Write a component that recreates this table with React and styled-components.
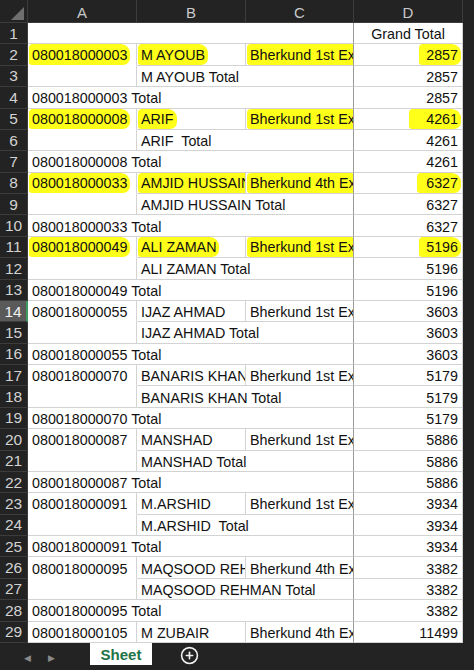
import React from 'react';
import styled, { createGlobalStyle } from 'styled-components';
import { CirclePlus } from 'lucide-react';

const GlobalStyle = createGlobalStyle`
    html, body {
        margin: 0;
        padding: 0;
        background: #232323;
    }
    * {
        box-sizing: border-box;
    }
`;

const groups = [
    { id: '080018000003', name: 'M AYOUB', nameTotal: 'M AYOUB Total', area: 'Bherkund 1st Ext', total: 2857, hl: { d: 7 } },
    { id: '080018000008', name: 'ARIF', nameTotal: 'ARIF  Total', area: 'Bherkund 1st Ext', total: 4261, hl: { d: 17 } },
    { id: '080018000033', name: 'AMJID HUSSAIN', nameTotal: 'AMJID HUSSAIN Total', area: 'Bherkund 4th Ext', total: 6327, hl: { d: 9, bFill: true } },
    { id: '080018000049', name: 'ALI ZAMAN', nameTotal: 'ALI ZAMAN Total', area: 'Bherkund 1st Ext', total: 5196, hl: { d: 7 } },
    { id: '080018000055', name: 'IJAZ AHMAD', nameTotal: 'IJAZ AHMAD Total', area: 'Bherkund 1st Ext', total: 3603 },
    { id: '080018000070', name: 'BANARIS KHAN', nameTotal: 'BANARIS KHAN Total', area: 'Bherkund 1st Ext', total: 5179 },
    { id: '080018000087', name: 'MANSHAD', nameTotal: 'MANSHAD Total', area: 'Bherkund 1st Ext', total: 5886 },
    { id: '080018000091', name: 'M.ARSHID', nameTotal: 'M.ARSHID  Total', area: 'Bherkund 1st Ext', total: 3934 },
    { id: '080018000095', name: 'MAQSOOD REHMAN', nameTotal: 'MAQSOOD REHMAN Total', area: 'Bherkund 4th Ext', total: 3382 },
    { id: '080018000105', name: 'M ZUBAIR', area: 'Bherkund 4th Ext', total: 11499, partial: true },
];

const Marked = ({ on, fill, pl, children }) =>
    on ? (
        <Mark $fill={fill} $pl={pl}>
            {children}
        </Mark>
    ) : (
        children
    );

const App = () => {
    let rowNo = 1;
    const rows = [];

    rows.push(
        <React.Fragment key='r1'>
            <RowHead $row={rowNo}>{rowNo}</RowHead>
            <Cell $col={2} $span={3} />
            <Cell $col={5} $align='center' $divider>
                Grand Total
            </Cell>
        </React.Fragment>
    );

    groups.forEach((g) => {
        const on = Boolean(g.hl);
        rowNo += 1;
        rows.push(
            <React.Fragment key={g.id}>
                <RowHead $row={rowNo} $active={rowNo === 14}>
                    {rowNo}
                </RowHead>
                <Cell $col={2} $noBottom={!g.partial}>
                    <Marked on={on}>{g.id}</Marked>
                </Cell>
                <Cell $col={3}>
                    <Marked on={on} fill={g.hl && g.hl.bFill}>
                        {g.name}
                    </Marked>
                </Cell>
                <Cell $col={4}>
                    <Marked on={on} fill>
                        {g.area}
                    </Marked>
                </Cell>
                <Cell $col={5} $align='flex-end' $divider>
                    <Marked on={on} pl={g.hl && g.hl.d}>
                        {g.total}
                    </Marked>
                </Cell>
            </React.Fragment>
        );
        if (g.partial) return;

        rowNo += 1;
        rows.push(
            <React.Fragment key={g.id + '-n'}>
                <RowHead $row={rowNo}>{rowNo}</RowHead>
                <Cell $col={2} />
                <Cell $col={3} $span={2}>
                    {g.nameTotal}
                </Cell>
                <Cell $col={5} $align='flex-end' $divider>
                    {g.total}
                </Cell>
            </React.Fragment>
        );

        rowNo += 1;
        rows.push(
            <React.Fragment key={g.id + '-t'}>
                <RowHead $row={rowNo}>{rowNo}</RowHead>
                <Cell $col={2} $span={3}>
                    {g.id} Total
                </Cell>
                <Cell $col={5} $align='flex-end' $divider>
                    {g.total}
                </Cell>
            </React.Fragment>
        );
    });

    return (
        <>
            <GlobalStyle />
            <Window>
                <SheetArea>
                    <Grid>
                        <Corner>
                            <CornerTriangle />
                        </Corner>
                        <ColHead>A</ColHead>
                        <ColHead>B</ColHead>
                        <ColHead>C</ColHead>
                        <ColHead>D</ColHead>
                        {rows}
                    </Grid>
                    <Gutter />
                </SheetArea>
                <TabBar>
                    <NavArrows>
                        <Arrow>◀</Arrow>
                        <Arrow>▶</Arrow>
                    </NavArrows>
                    <Tab>Sheet</Tab>
                    <AddButton>
                        <CirclePlus size={19} color='#f0f0f0' strokeWidth={2} />
                    </AddButton>
                </TabBar>
            </Window>
        </>
    );
};

export default App;

const Window = styled.div`
    width: 474px;
    height: 670px;
    display: flex;
    flex-direction: column;
    background: #232323;
    font-family: 'Liberation Sans', Arial, sans-serif;
    overflow: hidden;
`;

const SheetArea = styled.div`
    display: flex;
    height: 643px;
`;

const Grid = styled.div`
    display: grid;
    width: 463px;
    grid-template-columns: 28px 109px 109px 108px 109px;
    grid-template-rows: 23px;
    grid-auto-rows: 21.38px;
    background: #fff;
`;

const Gutter = styled.div`
    flex: 1;
    background: #232323;
`;

const Corner = styled.div`
    background: #232323;
    border-right: 1px solid #3c3c3c;
    border-bottom: 1px solid #3c3c3c;
    position: relative;
`;

const CornerTriangle = styled.div`
    position: absolute;
    right: 3px;
    bottom: 2px;
    width: 0;
    height: 0;
    border-left: 13px solid transparent;
    border-bottom: 13px solid #6e6e6e;
`;

const ColHead = styled.div`
    background: #232323;
    color: #c9c9c9;
    font-size: 15px;
    display: flex;
    align-items: center;
    justify-content: center;
    padding-top: 2px;
    border-right: 1px solid #3c3c3c;
    border-bottom: 1px solid #3c3c3c;
`;

const RowHead = styled.div`
    grid-column: 1;
    grid-row: ${(p) => p.$row + 1};
    background: ${(p) => (p.$active ? '#5a5a5a' : '#232323')};
    color: ${(p) => (p.$active ? '#f2f2f2' : '#d2d2d2')};
    font-size: 15.5px;
    display: flex;
    align-items: center;
    justify-content: center;
    padding-top: 1px;
    border-bottom: 1px solid #3c3c3c;
    border-right: ${(p) => (p.$active ? '2px solid #3f9a62' : '1px solid #3c3c3c')};
`;

const Cell = styled.div`
    grid-column: ${(p) => p.$col} / span ${(p) => p.$span || 1};
    display: flex;
    align-items: center;
    justify-content: ${(p) => p.$align || 'flex-start'};
    padding: 2px 4px 0;
    font-size: 14.3px;
    color: #111;
    white-space: pre;
    overflow: hidden;
    min-width: 0;
    border-right: 1px solid #d3d3d3;
    border-bottom: ${(p) => (p.$noBottom ? '1px solid transparent' : '1px solid #d3d3d3')};
    border-left: ${(p) => (p.$divider ? '1px solid #9a9a9a' : 'none')};
    margin-left: ${(p) => (p.$divider ? '-1px' : '0')};
`;

const Mark = styled.span`
    display: inline-flex;
    align-items: center;
    align-self: stretch;
    flex: ${(p) => (p.$fill ? '1 0 auto' : 'none')};
    margin: -2px -3px 0;
    padding: 0 3px 0 ${(p) => (p.$pl ? p.$pl : 3)}px;
    background: #ffff1a;
    border-radius: 4px 9px 7px 3px;
`;

const TabBar = styled.div`
    flex: 1;
    display: flex;
    align-items: stretch;
    background: #232323;
`;

const NavArrows = styled.div`
    width: 90px;
    display: flex;
    align-items: center;
    gap: 17px;
    padding: 2px 0 0 24px;
`;

const Arrow = styled.span`
    color: #8a8a8a;
    font-size: 9px;
`;

const Tab = styled.div`
    width: 62px;
    height: 22px;
    background: #fff;
    color: #217346;
    font-weight: bold;
    font-size: 15px;
    display: flex;
    align-items: center;
    justify-content: center;
`;

const AddButton = styled.div`
    display: flex;
    align-items: center;
    padding: 0 0 3px 28px;
`;
